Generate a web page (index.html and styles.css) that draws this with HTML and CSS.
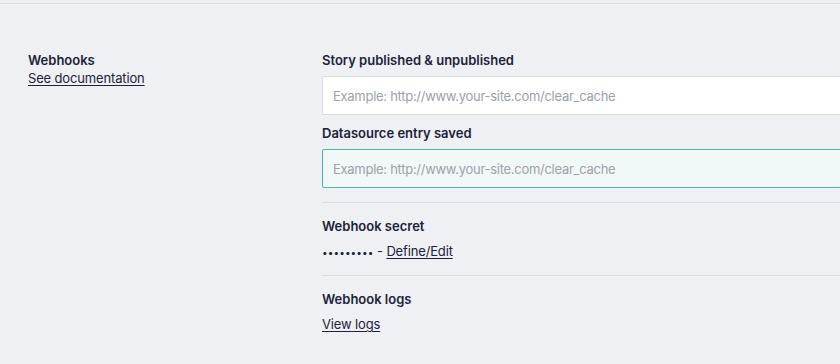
FILE: index.html
```html
<!DOCTYPE html>
<html lang="en">
<head>
    <meta charset="UTF-8">
    <meta name="viewport" content="width=device-width, initial-scale=1.0">
    <title>Webhooks settings</title>
    <link rel="stylesheet" href="styles.css">
</head>
<body>
    <div class="topbar"></div>

    <div class="settings">
        <div class="intro">
            <p class="intro-title">Webhooks</p>
            <a href="#" class="link">See documentation</a>
        </div>

        <div class="fields">
            <label class="field-label" for="story-hook">Story published &amp; unpublished</label>
            <input class="field-input" id="story-hook" type="text" placeholder="Example: http://www.your-site.com/clear_cache">

            <label class="field-label" for="datasource-hook">Datasource entry saved</label>
            <input class="field-input is-focused" id="datasource-hook" type="text" placeholder="Example: http://www.your-site.com/clear_cache">

            <hr class="divider">

            <p class="field-label">Webhook secret</p>
            <p class="field-value secret"><span class="mask">•••••••••</span> - <a href="#" class="link">Define/Edit</a></p>

            <hr class="divider">

            <p class="field-label">Webhook logs</p>
            <p class="field-value"><a href="#" class="link">View logs</a></p>
        </div>
    </div>
</body>
</html>
```

FILE: styles.css
```css
body {
    margin: 0;
    background: #eff0f4;
    color: #1b2339;
    font-family: Inter, 'Noto Sans', sans-serif;
    font-size: 13px;
    letter-spacing: -0.15px;
    overflow: hidden;
}

.topbar {
    height: 3px;
    border-bottom: 1px solid #dcdee4;
}

.settings {
    display: grid;
    grid-template-columns: 294px 700px;
    padding: 46px 0 0 28px;
}

.intro-title {
    margin: 1px 0 0;
    font-weight: 600;
    font-size: 13px;
    line-height: 18px;
    letter-spacing: 0;
}

.link {
    color: #1b2339;
    text-decoration: underline;
    text-underline-offset: 2px;
    line-height: 18px;
}

.fields {
    display: flex;
    flex-direction: column;
}

.field-label {
    display: block;
    margin: 0;
    font-weight: 600;
    font-size: 13px;
    line-height: 20px;
    letter-spacing: 0;
}

.field-input {
    box-sizing: border-box;
    height: 39px;
    margin: 6px 0 8px;
    padding: 0 10px;
    border: 1px solid #d8dae0;
    border-radius: 2px;
    background: #fff;
    font-family: inherit;
    font-size: 13px;
    letter-spacing: -0.28px;
    color: #1b2339;
    outline: none;
}

.field-input::placeholder {
    color: #9ea1a9;
}

.field-input.is-focused {
    border-color: #4eb1b3;
    background: #f1f8f8;
}

.divider {
    margin: 6px 0 13px;
    border: 0;
    border-top: 1px solid #dcdee3;
}

.field-value {
    margin: 5px 0 7px;
    line-height: 20px;
}

.mask {
    font-size: 10px;
    letter-spacing: 0.1px;
}
```
